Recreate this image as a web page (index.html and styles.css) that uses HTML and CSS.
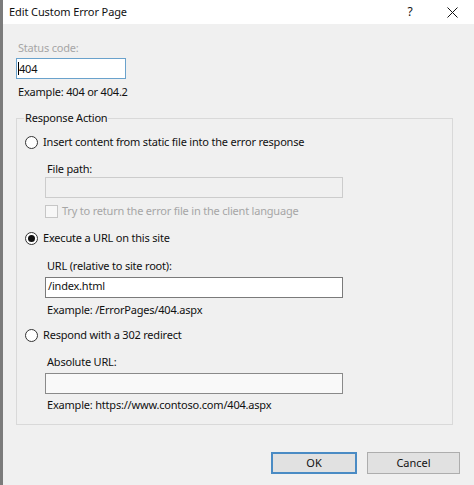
FILE: index.html
```html
<!DOCTYPE html>
<html>
<head>
<meta charset="utf-8">
<title>Edit Custom Error Page</title>
<link rel="stylesheet" href="styles.css">
</head>
<body>
<div class="dialog">
  <div class="titlebar">
    <span class="title">Edit Custom Error Page</span>
    <span class="help">?</span>
    <span class="close"><svg width="11" height="11" viewBox="0 0 11 11"><path d="M0.5 0.5L10.5 10.5M10.5 0.5L0.5 10.5" stroke="#111" stroke-width="1" fill="none"/></svg></span>
  </div>
  <div class="main">
    <div class="label disabled status-label">Status code:</div>
    <div class="textbox status-box"><span class="caret"></span>404</div>
    <div class="label example-top">Example: 404 or 404.2</div>
    <fieldset class="group">
      <legend>Response Action</legend>
      <div class="radio-row r1"><span class="radio"></span><span>Insert content from static file into the error response</span></div>
      <div class="sub">
        <div class="label file-label">File path:</div>
        <div class="textbox wide disabled-box"></div>
        <div class="check-row"><span class="checkbox"></span><span class="disabled">Try to return the error file in the client language</span></div>
      </div>
      <div class="radio-row r2"><span class="radio checked"></span><span>Execute a URL on this site</span></div>
      <div class="sub">
        <div class="label url-label">URL (relative to site root):</div>
        <div class="textbox wide url-box">/index.html</div>
        <div class="label ex2">Example: /ErrorPages/404.aspx</div>
      </div>
      <div class="radio-row r3"><span class="radio"></span><span>Respond with a 302 redirect</span></div>
      <div class="sub">
        <div class="label abs-label">Absolute URL:</div>
        <div class="textbox wide abs-box"></div>
        <div class="label ex3">Example: https://www.contoso.com/404.aspx</div>
      </div>
    </fieldset>
  </div>
  <div class="buttons">
    <button class="btn ok">OK</button>
    <button class="btn cancel">Cancel</button>
  </div>
</div>
</body>
</html>
```

FILE: styles.css
```css
* { box-sizing: border-box; }
html, body { margin: 0; padding: 0; }
body {
  font-family: "Noto Sans", "Open Sans", sans-serif;
  font-size: 11px;
  line-height: 16px;
  letter-spacing: -0.2px;
  color: #111;
  background: #f0f0f0;
}
.dialog {
  width: 474px;
  height: 485px;
  border-left: 3px solid #7b7b7b;
  background: #f0f0f0;
  overflow: hidden;
}
.titlebar {
  height: 24px;
  background: #fff;
  display: flex;
  align-items: center;
  padding-left: 6px;
  font-size: 11px;
  letter-spacing: -0.1px;
}
.title { flex: 1; }
.help {
  width: 14px;
  text-align: center;
  font-size: 12px;
}
.close {
  display: flex;
  margin-left: 30px;
  margin-right: 16px;
}
.main { padding: 0 21px 0 13px; }
.label { padding-left: 2px; }
.disabled { color: #a6a6a6; }
.status-label { margin-top: 16px; }
.textbox {
  height: 21px;
  border: 1px solid #7a7a7a;
  background: #fff;
  line-height: 16px;
  padding: 0 2px;
  white-space: nowrap;
}
.status-box {
  width: 110px;
  margin-top: 2px;
  border-color: #6aa2cc;
  padding-left: 1px;
  display: flex;
  align-items: center;
}
.caret {
  display: inline-block;
  width: 1px;
  height: 13px;
  background: #000;
}
.example-top { margin-top: 5px; }
.group {
  margin: 10px 0 0;
  padding: 0 0 11px 7px;
  border: 1px solid #d9d9d9;
  min-inline-size: 0;
}
.group legend {
  padding: 0 1px;
  line-height: 16px;
}
.radio-row {
  display: flex;
  align-items: center;
  margin-left: 1px;
}
.radio {
  flex: none;
  width: 13px;
  height: 13px;
  border: 1px solid #333;
  border-radius: 50%;
  background: #fff;
  margin-right: 5px;
  position: relative;
}
.radio.checked::after {
  content: "";
  position: absolute;
  left: 2px;
  top: 2px;
  width: 7px;
  height: 7px;
  border-radius: 50%;
  background: #111;
}
.r1 { margin-top: 8px; }
.r2 { margin-top: 11px; }
.r3 { margin-top: 9px; }
.sub { margin-left: 21px; }
.file-label { margin-top: 11px; }
.url-label { margin-top: 12px; }
.abs-label { margin-top: 11px; }
.wide { width: 298px; }
.disabled-box { border-color: #cccccc; background: #f0f0f0; }
.url-box { margin-top: 3px; }
.abs-box { margin-top: 3px; border-color: #8a8a8a; background: #f9f9f9; }
.ex2 { margin-top: 4px; }
.ex3 { margin-top: 3px; }
.check-row {
  display: flex;
  align-items: center;
  margin-top: 5px;
}
.checkbox {
  flex: none;
  width: 13px;
  height: 13px;
  border: 1px solid #c6c6c6;
  background: #f7f7f7;
  margin-right: 4px;
}
.buttons {
  display: flex;
  justify-content: flex-end;
  gap: 10px;
  padding-right: 14px;
  margin-top: 27px;
}
.btn {
  height: 22px;
  font: inherit;
  color: #111;
  background: #e1e1e1;
  border: 1px solid #adadad;
  padding: 0;
  margin: 0;
}
.ok { width: 86px; border: 2px solid #4a8bc4; }
.cancel { width: 93px; }
```
